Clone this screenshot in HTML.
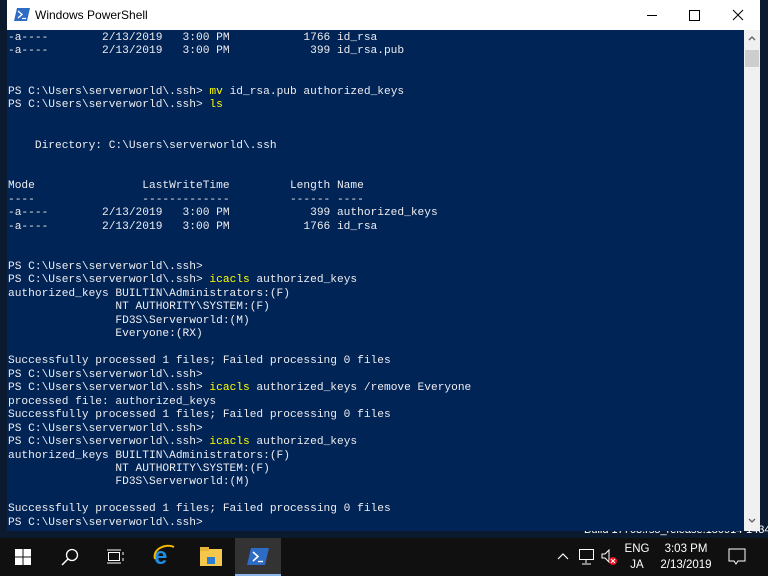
<!DOCTYPE html>
<html><head><meta charset="utf-8"><style>
*{margin:0;padding:0;box-sizing:border-box}
body{width:768px;height:576px;overflow:hidden;background:#0b1a2e;position:relative;font-family:"Liberation Sans",sans-serif}
.win{position:absolute;left:7px;top:0;width:753px;height:531px;background:#fff}
.title{position:absolute;left:0;top:0;width:753px;height:30px;background:#fff}
.title .t{position:absolute;left:28px;top:8px;font-size:12px;color:#000}
.con{position:absolute;left:0;top:30px;width:737px;height:501px;background:#012456;overflow:hidden}
pre{font-family:"Liberation Mono",monospace;font-size:11.2px;line-height:13.47px;color:#eeedf0;margin-left:1px;margin-top:2px}
.y{color:#ffff00}
.sb{position:absolute;left:737px;top:30px;width:16px;height:501px;background:#f0f0f0}
.thumb{position:absolute;left:1px;top:20px;width:14px;height:17px;background:#cdcdcd}
.task{position:absolute;left:0;top:538px;width:768px;height:38px;background:#101010}
.build{position:absolute;left:584px;top:524px;font-size:11px;color:#fff;white-space:nowrap}
.tray{position:absolute;color:#fff;font-size:11.5px;text-align:center}
</style></head><body>
<div class="build">Build 17763.rs5_release.180914-1434</div>
<div class="win">
<div class="title">
<svg style="position:absolute;left:7px;top:8px" width="16" height="13" viewBox="0 0 16 13"><polygon points="3,0 16,0 13,13 0,13" fill="#2d6bc4"/><path d="M4,3 L8,6.5 L4,10" stroke="#fff" stroke-width="1.4" fill="none"/><path d="M8,10.5 H12" stroke="#fff" stroke-width="1.2"/></svg>
<div class="t">Windows PowerShell</div>
<svg style="position:absolute;left:640px;top:8px" width="110" height="14"><path d="M0,7.5 H10" stroke="#000"/><rect x="42.5" y="2.5" width="10" height="10" fill="none" stroke="#000"/><path d="M86,2 L96,12 M96,2 L86,12" stroke="#000"/></svg>
</div>
<div class="con"><pre>-a----        2/13/2019   3:00 PM           1766 id_rsa
-a----        2/13/2019   3:00 PM            399 id_rsa.pub


PS C:\Users\serverworld\.ssh&gt; <span class="y">mv</span> id_rsa.pub authorized_keys
PS C:\Users\serverworld\.ssh&gt; <span class="y">ls</span>


    Directory: C:\Users\serverworld\.ssh


Mode                LastWriteTime         Length Name
----                -------------         ------ ----
-a----        2/13/2019   3:00 PM            399 authorized_keys
-a----        2/13/2019   3:00 PM           1766 id_rsa


PS C:\Users\serverworld\.ssh&gt;
PS C:\Users\serverworld\.ssh&gt; <span class="y">icacls</span> authorized_keys
authorized_keys BUILTIN\Administrators:(F)
                NT AUTHORITY\SYSTEM:(F)
                FD3S\Serverworld:(M)
                Everyone:(RX)

Successfully processed 1 files; Failed processing 0 files
PS C:\Users\serverworld\.ssh&gt;
PS C:\Users\serverworld\.ssh&gt; <span class="y">icacls</span> authorized_keys /remove Everyone
processed file: authorized_keys
Successfully processed 1 files; Failed processing 0 files
PS C:\Users\serverworld\.ssh&gt;
PS C:\Users\serverworld\.ssh&gt; <span class="y">icacls</span> authorized_keys
authorized_keys BUILTIN\Administrators:(F)
                NT AUTHORITY\SYSTEM:(F)
                FD3S\Serverworld:(M)

Successfully processed 1 files; Failed processing 0 files
PS C:\Users\serverworld\.ssh&gt;</pre></div>
<div class="sb"><div class="thumb"></div>
<svg style="position:absolute;left:4px;top:5px" width="8" height="6"><path d="M1,5 L4,2 L7,5" stroke="#606060" fill="none" stroke-width="1.3"/></svg>
<svg style="position:absolute;left:4px;top:488px" width="8" height="6"><path d="M1,1 L4,4 L7,1" stroke="#606060" fill="none" stroke-width="1.3"/></svg>
</div>
</div>
<div class="task">
<svg style="position:absolute;left:15px;top:11px" width="16" height="16"><rect x="0" y="0" width="7.5" height="7.5" fill="#fff"/><rect x="8.5" y="0" width="7.5" height="7.5" fill="#fff"/><rect x="0" y="8.5" width="7.5" height="7.5" fill="#fff"/><rect x="8.5" y="8.5" width="7.5" height="7.5" fill="#fff"/></svg>
<svg style="position:absolute;left:61px;top:10px" width="18" height="18"><circle cx="11" cy="7" r="5.5" stroke="#fff" fill="none" stroke-width="1.3"/><path d="M7,11 L1,17" stroke="#fff" stroke-width="1.5"/></svg>
<svg style="position:absolute;left:107px;top:11px" width="18" height="16"><rect x="1.5" y="3.5" width="11" height="8" fill="none" stroke="#fff"/><path d="M0,1 H14 M0,14 H14 M16,3 V6 M16,9 V12" stroke="#fff"/></svg>
<svg style="position:absolute;left:152px;top:5px" width="24" height="24"><text x="2" y="21" font-family="Liberation Sans" font-size="24" font-weight="bold" fill="#1e8fe0">e</text><path d="M3,16 C0,6 14,0 22,4" stroke="#f2b700" stroke-width="2" fill="none"/></svg>
<svg style="position:absolute;left:200px;top:9px" width="22" height="19"><rect x="0" y="2" width="22" height="17" fill="#f5c84c"/><rect x="0" y="0" width="9" height="4" fill="#e8b33a"/><rect x="7" y="10" width="8" height="7" fill="#2a7fd4"/></svg>
<div style="position:absolute;left:235px;top:0;width:46px;height:38px;background:#333"></div>
<div style="position:absolute;left:235px;top:36px;width:46px;height:2px;background:#8ab4e8"></div>
<svg style="position:absolute;left:247px;top:10px" width="22" height="17"><polygon points="4,0 22,0 18,17 0,17" fill="#2d6bc4"/><path d="M6,4 L11,8.5 L6,13" stroke="#fff" stroke-width="1.6" fill="none"/><path d="M11,13.5 H16" stroke="#fff" stroke-width="1.4"/></svg>
<svg style="position:absolute;left:557px;top:14px" width="12" height="8"><path d="M1,7 L6,2 L11,7" stroke="#fff" fill="none" stroke-width="1.2"/></svg>
<svg style="position:absolute;left:578px;top:10px" width="18" height="18"><rect x="1.5" y="1.5" width="14" height="10" fill="none" stroke="#fff"/><path d="M8,12 V15 M4,16 H13" stroke="#fff"/></svg>
<svg style="position:absolute;left:601px;top:10px" width="18" height="18"><path d="M1,6 H4 L8,2 V14 L4,10 H1 Z" stroke="#fff" fill="none"/><circle cx="12" cy="13" r="4" fill="#e81123"/><path d="M10,11 L14,15 M14,11 L10,15" stroke="#fff"/></svg>
<div class="tray" style="left:622px;top:5px;width:30px">ENG</div>
<div class="tray" style="left:622px;top:21px;width:30px">JA</div>
<div class="tray" style="left:656px;top:5px;width:60px">3:03 PM</div>
<div class="tray" style="left:656px;top:21px;width:60px">2/13/2019</div>
<svg style="position:absolute;left:728px;top:10px" width="18" height="18"><path d="M1,1 H17 V13 H10 L8,16 L6,13 H1 Z" stroke="#fff" fill="none"/></svg>
</div>
</body></html>
